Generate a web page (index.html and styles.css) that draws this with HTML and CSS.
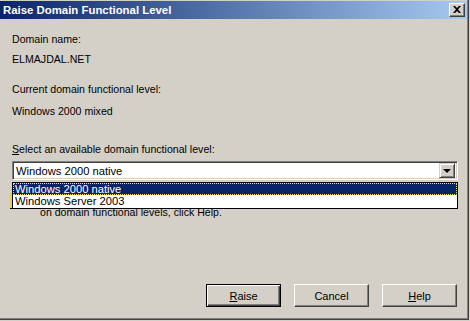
FILE: index.html
```html
<!DOCTYPE html>
<html>
<head>
<meta charset="utf-8">
<link rel="stylesheet" href="styles.css">
</head>
<body>
<div class="window">
  <div class="titlebar">
    <span class="title">Raise Domain Functional Level</span>
    <span class="close">
      <svg width="8" height="7" viewBox="0 0 8 7"><path d="M0 0h2l2 2 2-2h2L5 3.5 8 7H6L4 5 2 7H0l3-3.5z" fill="#000"/></svg>
    </span>
  </div>
  <div class="content">
    <div class="text l1">Domain name:</div>
    <div class="text l2">ELMAJDAL.NET</div>
    <div class="text l3">Current domain functional level:</div>
    <div class="text l4">Windows 2000 mixed</div>
    <div class="text l5"><u>S</u>elect an available domain functional level:</div>
    <div class="combo-wrap">
      <div class="combo">
        <span class="combo-text">Windows 2000 native</span>
        <span class="arrow"><span class="tri"></span></span>
      </div>
      <ul class="list">
        <li class="item selected">Windows 2000 native</li>
        <li class="item">Windows Server 2003</li>
      </ul>
    </div>
    <div class="note">
      <span class="icon"></span>
      <p class="note-text">on domain functional levels, click Help.</p>
    </div>
  </div>
  <div class="buttons">
    <span class="btn default"><span class="btn-inner"><u>R</u>aise</span></span>
    <span class="btn"><span class="btn-inner">Cancel</span></span>
    <span class="btn"><span class="btn-inner"><u>H</u>elp</span></span>
  </div>
</div>
</body>
</html>
```

FILE: styles.css
```css
html, body {
  margin: 0;
  padding: 0;
  background: #d4d0c8;
}
.window {
  width: 468px;
  height: 318px;
  background: #d4d0c8;
  border-right: 1px solid #404040;
  border-bottom: 1px solid #404040;
  box-shadow: inset -1px -1px 0 #808080;
  padding-top: 1px;
  box-sizing: content-box;
  display: flex;
  flex-direction: column;
  font-family: "Liberation Sans", Arial, sans-serif;
  font-size: 10.6px;
  color: #000;
  overflow: hidden;
  position: relative;
}
.titlebar {
  height: 18px;
  margin-right: 1px;
  background: linear-gradient(to right, #0a246a, #a6caf0);
  display: flex;
  align-items: center;
  justify-content: space-between;
  padding-left: 3px;
  padding-right: 2px;
}
.title {
  color: #fff;
  font-weight: bold;
  font-size: 11.4px;
}
.close {
  width: 16px;
  height: 14px;
  box-sizing: border-box;
  background: #d4d0c8;
  border-top: 1px solid #fff;
  border-left: 1px solid #fff;
  border-right: 1px solid #404040;
  border-bottom: 1px solid #404040;
  box-shadow: inset -1px -1px 0 #808080;
  display: flex;
  align-items: center;
  justify-content: center;
  padding-bottom: 1px;
}
.content {
  padding-left: 12px;
  padding-right: 10px;
}
.text {
  line-height: 13px;
  height: 13px;
  white-space: nowrap;
}
.l1 { margin-top: 14px; }
.l2 { margin-top: 7px; }
.l3 { margin-top: 17px; }
.l4 { margin-top: 9px; }
.l5 { margin-top: 25px; }
.combo-wrap {
  position: relative;
  margin-top: 5px;
  width: 446px;
}
.combo {
  height: 19px;
  box-sizing: border-box;
  background: #fff;
  border-top: 1px solid #808080;
  border-left: 1px solid #808080;
  border-right: 1px solid #fff;
  border-bottom: 1px solid #fff;
  box-shadow: inset 1px 1px 0 #404040, inset -1px -1px 0 #d4d0c8;
  display: flex;
  align-items: center;
  justify-content: space-between;
  padding: 2px 2px 2px 3px;
}
.combo-text {
  font-size: 11.2px;
  line-height: 14px;
}
.arrow {
  width: 16px;
  height: 15px;
  box-sizing: border-box;
  background: #d4d0c8;
  border-top: 1px solid #d4d0c8;
  border-left: 1px solid #d4d0c8;
  border-right: 1px solid #404040;
  border-bottom: 1px solid #404040;
  box-shadow: inset 1px 1px 0 #fff, inset -1px -1px 0 #808080;
  display: flex;
  align-items: center;
  justify-content: center;
}
.tri {
  width: 0;
  height: 0;
  border-left: 4px solid transparent;
  border-right: 4px solid transparent;
  border-top: 4px solid #000;
}
.list {
  position: absolute;
  left: 0;
  top: 21px;
  width: 446px;
  box-sizing: border-box;
  margin: 0;
  padding: 0;
  list-style: none;
  background: #fff;
  border: 1px solid #000;
  z-index: 2;
}
.item {
  height: 13px;
  line-height: 13px;
  font-size: 11.2px;
  padding-left: 2px;
  box-sizing: border-box;
  white-space: nowrap;
}
.item.selected {
  background: #0a246a;
  color: #fff;
  outline: 1px dotted #f0e080;
  outline-offset: -1px;
  height: 12px;
  line-height: 12px;
}
.note {
  display: flex;
  align-items: flex-start;
  margin-top: 13px;
  margin-left: -2px;
}
.icon {
  width: 14px;
  height: 16px;
  box-sizing: border-box;
  background: #e8d040;
  border-bottom: 1px solid #000;
  flex: none;
}
.note-text {
  margin: 13px 0 0 16px;
  line-height: 13px;
  white-space: nowrap;
}
.buttons {
  margin-top: auto;
  display: flex;
  justify-content: flex-end;
  gap: 13px;
  padding-right: 11px;
  padding-bottom: 12px;
}
.btn {
  width: 75px;
  height: 23px;
  box-sizing: border-box;
  background: #d4d0c8;
  border-top: 1px solid #fff;
  border-left: 1px solid #fff;
  border-right: 1px solid #404040;
  border-bottom: 1px solid #404040;
  box-shadow: inset -1px -1px 0 #808080;
  display: flex;
}
.btn.default {
  border: 1px solid #000;
  box-shadow: inset 1px 1px 0 #fff, inset -1px -1px 0 #404040, inset -2px -2px 0 #808080;
}
.btn-inner {
  flex: 1;
  display: flex;
  align-items: center;
  justify-content: center;
  font-size: 11px;
}
```
